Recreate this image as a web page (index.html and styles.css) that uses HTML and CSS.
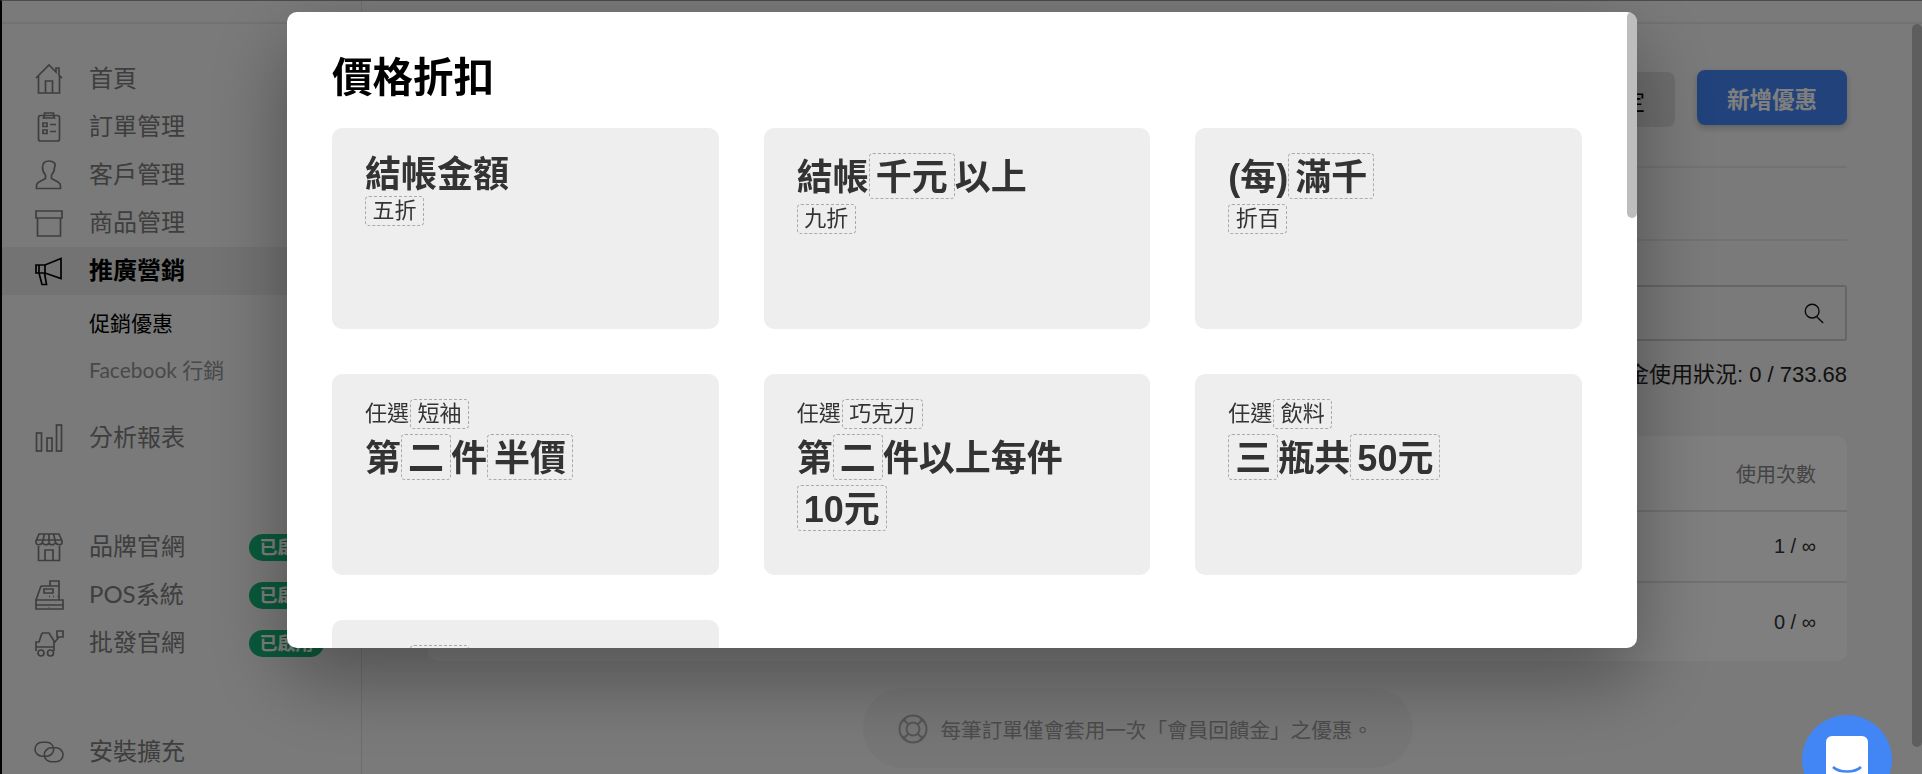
FILE: index.html
```html
<!DOCTYPE html>
<html lang="zh-Hant">
<head>
    <meta charset="UTF-8">
    <title>促銷優惠</title>
    <link rel="stylesheet" href="styles.css">
</head>
<body>
    <div class="app">
        <div class="topbar"><div class="topbar-left"></div></div>
        <div class="layout">
            <!-- Sidebar -->
            <aside class="sidebar">
                <a class="nav-item">
                    <svg class="nav-icon" viewBox="0 0 28 30"><path d="M1 14 14 1l7 7V4h3v7.500L27 14M3.500 12v17h21V12M10.500 29V17h7v12"/></svg>
                    <span>首頁</span>
                </a>
                <a class="nav-item">
                    <svg class="nav-icon" viewBox="0 0 28 30"><rect x="3.500" y="3.500" width="21" height="25.500" rx="2"/><path d="M9.500 3.500V1h9v2.500l1 2.500h-11zM8 11h4v3.500H8zM8 18h4v3.500H8zM15 12.500h6M15 19.500h6"/></svg>
                    <span>訂單管理</span>
                </a>
                <a class="nav-item">
                    <svg class="nav-icon" viewBox="0 0 28 30"><path d="M14 1c-4.500 0-6.500 3-6.500 6.500 0 3 1 5.500 3 7.500v3.500L4 22c-1.500.8-2.500 2-2.500 4v2.500h24V26c0-2-1-3.200-2.500-4l-6.500-3.500V15c2-2 3-4.500 3-7.500C21.500 4 18.500 1 14 1z"/></svg>
                    <span>客戶管理</span>
                </a>
                <a class="nav-item">
                    <svg class="nav-icon" viewBox="0 0 28 30"><path d="M1 3h26v7H1zM2.500 10v18h23V10"/></svg>
                    <span>商品管理</span>
                </a>
                <a class="nav-item nav-active">
                    <svg class="nav-icon" viewBox="0 0 28 30"><path d="M1 9h9l16-6.500v20L10 17H1zM10 9v8M4 17l3 11.500h4.500L9.500 17"/><path d="M4 9v8"/></svg>
                    <span>推廣營銷</span>
                </a>
                <a class="nav-sub nav-sub-active">促銷優惠</a>
                <a class="nav-sub">Facebook 行銷</a>

                <a class="nav-item nav-report">
                    <svg class="nav-icon" viewBox="0 0 28 30"><rect x="1.500" y="10" width="5" height="18"/><rect x="12" y="15" width="5" height="13"/><rect x="21.500" y="2" width="5" height="26"/></svg>
                    <span>分析報表</span>
                </a>

                <a class="nav-item nav-group">
                    <svg class="nav-icon" viewBox="0 0 28 30"><path d="M4 2h20l3 7v1.500c0 3-5 3-6.500 0-1 3-6 3-6.500 0-.5 3-5.500 3-6.500 0C6 13.500 1 13.500 1 10.500V9zM1 8h26M9.500 2 7.500 10M18.500 2l2 8M14 2v8M3.500 14v14.500h21V14M10 28.500V18h8v10.500"/></svg>
                    <span>品牌官網</span>
                    <em class="badge">已啟用</em>
                </a>
                <a class="nav-item">
                    <svg class="nav-icon" viewBox="0 0 28 30"><path d="M15 1h9v5h-9zM6 6h18v14M6 6 1 20M9 9h9v4H9zM1 20h27v9H1zM1 25h27M14 27v.5M14 16.500h1M18 16.500h1M22 16.500h.5"/></svg>
                    <span>POS系統</span>
                    <em class="badge">已啟用</em>
                </a>
                <a class="nav-item">
                    <svg class="nav-icon" viewBox="0 0 28 30"><path d="M7 5h7l5 8v10M7 5 4 14H1v9M1 19h18M22 3h6v6h-6zM24 9l-5 6"/><circle cx="6" cy="25" r="3"/><circle cx="15.500" cy="25" r="3"/></svg>
                    <span>批發官網</span>
                    <em class="badge">已啟用</em>
                </a>

                <a class="nav-item nav-group">
                    <svg class="nav-icon" viewBox="0 0 30 30"><rect x="0" y="4.500" width="20" height="15" rx="7.500"/><rect x="10" y="10.500" width="20" height="15" rx="7.500"/></svg>
                    <span>安裝擴充</span>
                </a>
            </aside>

            <!-- Main content -->
            <main class="main">
                <div class="page-actions">
                    <button class="btn btn-light">折扣設定</button>
                    <button class="btn btn-primary">新增優惠</button>
                </div>
                <div class="tabs"></div>
                <div class="search-row">
                    <div class="search-box">
                        <svg class="search-icon" viewBox="0 0 24 24"><circle cx="10" cy="10" r="7.500"/><path d="m15 16 7 7"/></svg>
                    </div>
                </div>
                <p class="usage">會員回饋金使用狀況: 0 / 733.68</p>
                <div class="table-card">
                    <div class="table-row table-head">使用次數</div>
                    <div class="table-row">1 / ∞</div>
                    <div class="table-row table-last">0 / ∞</div>
                </div>
                <div class="tip-row">
                    <div class="tip">
                        <svg class="tip-icon" viewBox="0 0 30 30"><circle cx="15" cy="15" r="13.500"/><circle cx="15" cy="15" r="6.500"/><path d="m5.500 5.500 5 5M19.500 10.500l5-5M5.500 24.500l5-5M19.500 19.500l5 5M8 4l-4 4M26 8l-4-4M4 22l4 4M22 26l4-4"/></svg>
                        <span>每筆訂單僅會套用一次「會員回饋金」之優惠。</span>
                    </div>
                </div>
            </main>
            <div class="page-scroll"><div class="page-thumb"></div></div>
        </div>
    </div>

    <div class="overlay"></div>

    <!-- Price discount dialog -->
    <div class="modal">
        <div class="modal-body">
            <h2 class="modal-title">價格折扣</h2>
            <div class="card-grid">
                <div class="card">
                    <div class="card-title">結帳金額</div>
                    <div class="card-sub"><span class="tag">五折</span></div>
                </div>
                <div class="card">
                    <div class="card-title">結帳<span class="tag">千元</span>以上</div>
                    <div class="card-sub"><span class="tag">九折</span></div>
                </div>
                <div class="card">
                    <div class="card-title">(每)<span class="tag">滿千</span></div>
                    <div class="card-sub"><span class="tag">折百</span></div>
                </div>
                <div class="card">
                    <div class="card-sub"><span class="pick">任選</span><span class="tag">短袖</span></div>
                    <div class="card-title">第<span class="tag">二</span>件<span class="tag">半價</span></div>
                </div>
                <div class="card">
                    <div class="card-sub"><span class="pick">任選</span><span class="tag">巧克力</span></div>
                    <div class="card-title">第<span class="tag">二</span>件以上每件<span class="tag">10元</span></div>
                </div>
                <div class="card">
                    <div class="card-sub"><span class="pick">任選</span><span class="tag">飲料</span></div>
                    <div class="card-title"><span class="tag">三</span>瓶共<span class="tag">50元</span></div>
                </div>
                <div class="card">
                    <div class="card-sub"><span class="pick">任選</span><span class="tag">短袖</span></div>
                    <div class="card-title">買<span class="tag">一</span>送<span class="tag">一</span></div>
                </div>
            </div>
        </div>
        <div class="modal-thumb"></div>
    </div>

    <div class="chat-bubble">
        <div class="chat-face">
            <svg class="chat-smile" viewBox="0 0 30 8"><path d="M1 1c6 6 22 6 28 0"/></svg>
        </div>
    </div>
</body>
</html>
```

FILE: styles.css
```css
* {
    box-sizing: border-box;
}
html, body {
    height: 100%;
}
body {
    margin: 0;
    overflow: hidden;
    background-color: #f4f4f4;
    color: #333;
    font-family: "Liberation Sans", "Noto Sans CJK TC", sans-serif;
}
.app {
    height: 774px;
    border-top: 1px solid #999;
    border-left: 2px solid #000;
    display: flex;
    flex-direction: column;
}
.topbar {
    height: 23px;
    flex: none;
    border-bottom: 2px solid #e4e4e4;
}
.topbar-left {
    width: 360px;
    height: 100%;
    border-right: 1px solid #dcdcdc;
}
.layout {
    flex: 1;
    display: flex;
    min-height: 0;
}

/* Sidebar */
.sidebar {
    width: 360px;
    flex: none;
    padding-top: 31px;
    border-right: 1px solid #dcdcdc;
    font-family: Lato, "Noto Sans CJK TC", sans-serif;
}
.nav-item {
    height: 48px;
    display: flex;
    align-items: center;
    padding-left: 33px;
    font-size: 24px;
    color: #7c7c7c;
}
.nav-item span {
    width: 95px;
    padding-bottom: 6px;
    white-space: nowrap;
}
.nav-icon {
    width: 28px;
    height: 30px;
    flex: none;
    margin-right: 26px;
    fill: none;
    stroke: currentColor;
    stroke-width: 1.700;
    overflow: visible;
}
.nav-active {
    background-color: #e6e6e6;
    color: #000;
    font-weight: 700;
}
.nav-sub {
    display: flex;
    align-items: center;
    height: 47px;
    padding-left: 87px;
    font-size: 21px;
    color: #929292;
}
.nav-sub-active {
    margin-top: 3px;
    color: #000;
}
.nav-report {
    margin-top: 22px;
}
.nav-group {
    margin-top: 61px;
}
.badge {
    margin-left: 65px;
    width: 75px;
    height: 27px;
    line-height: 27px;
    border-radius: 14px;
    text-align: center;
    font-style: normal;
    font-size: 18px;
    font-weight: 700;
    color: #fff;
    background-color: #15b378;
}

/* Main content */
.main {
    flex: 1;
    min-width: 0;
    padding: 0 65px 0 66px;
}
.page-actions {
    display: flex;
    justify-content: flex-end;
    align-items: flex-start;
    gap: 22px;
    padding-top: 46px;
    height: 142px;
}
.btn {
    height: 55px;
    padding: 0 30px;
    border: none;
    border-radius: 8px;
    font-size: 22.500px;
    font-family: inherit;
}
.btn-light {
    margin-top: 2px;
    background-color: #dcdcdc;
    color: #000;
}
.btn-primary {
    width: 150px;
    background-color: #4285f4;
    color: #fff;
    font-weight: 700;
    box-shadow: 0 3px 6px rgba(0, 0, 0, 0.2);
}
.tabs {
    height: 75px;
    border-top: 2px solid #e4e4e4;
    border-bottom: 2px solid #e4e4e4;
}
.search-row {
    display: flex;
    justify-content: flex-end;
    padding-top: 44px;
}
.search-box {
    width: 420px;
    height: 56px;
    padding-right: 20px;
    display: flex;
    justify-content: flex-end;
    align-items: center;
    border: 2px solid #ccc;
    border-radius: 3px;
}
.search-icon {
    width: 22px;
    height: 22px;
    fill: none;
    stroke: #111;
    stroke-width: 1.500;
}
.usage {
    margin: 18px 0 0;
    height: 31px;
    line-height: 31px;
    text-align: right;
    font-size: 22px;
    color: #222;
}
.table-card {
    margin-top: 46px;
    height: 225px;
    background-color: #fff;
    border-radius: 10px;
}
.table-row {
    height: 71px;
    padding-right: 31px;
    display: flex;
    align-items: center;
    justify-content: flex-end;
    border-bottom: 2px solid #e4e4e4;
    font-size: 20px;
}
.table-head {
    height: 76px;
    color: #888;
}
.table-last {
    height: 78px;
    border-bottom: none;
}
.tip-row {
    display: flex;
    justify-content: center;
    padding-top: 27px;
}
.tip {
    width: 550px;
    height: 80px;
    padding-left: 35px;
    padding-top: 1px;
    display: flex;
    align-items: center;
    gap: 13px;
    border-radius: 40px;
    background-color: #ececec;
    font-size: 20.600px;
    color: #999;
    white-space: nowrap;
}
.tip-icon {
    width: 30px;
    height: 30px;
    flex: none;
    fill: none;
    stroke: #aaa;
    stroke-width: 2;
}
.page-scroll {
    width: 10px;
    flex: none;
}
.page-thumb {
    height: 723px;
    background-color: #bdbdbd;
    border-radius: 5px;
}

/* Dialog */
.overlay {
    position: fixed;
    inset: 0;
    background-color: rgba(0, 0, 0, 0.5);
}
.modal {
    position: fixed;
    left: 287px;
    top: 12px;
    width: 1350px;
    height: 636px;
    background-color: #fff;
    border-radius: 10px;
    overflow: hidden;
    box-shadow: 0 30px 80px rgba(0, 0, 0, 0.35);
}
.modal-body {
    height: 100%;
    overflow: hidden;
    padding: 36px 55px 0 45px;
}
.modal-thumb {
    position: absolute;
    top: 0;
    right: 0;
    width: 10px;
    height: 206px;
    background-color: #bdbdbd;
    border-radius: 5px;
}
.modal-title {
    margin: 0 0 20px;
    height: 60px;
    line-height: 60px;
    font-size: 40.500px;
    font-weight: 700;
    color: #000;
}
.card-grid {
    display: grid;
    grid-template-columns: repeat(3, 1fr);
    grid-auto-rows: 201px;
    gap: 45px;
}
.card {
    padding: 25px 33px;
    background-color: #eee;
    border-radius: 10px;
    color: #333;
}
.card-title {
    font-size: 36px;
    font-weight: 700;
    line-height: 43px;
}
.card-sub {
    font-size: 22px;
    line-height: 30px;
}
.pick {
    margin-right: 1px;
}
.tag {
    display: inline-block;
    padding: 0 6px;
    border: 1px dashed #aaa;
    border-radius: 4px;
}
.card-title .tag {
    height: 46px;
    line-height: 48px;
    margin-bottom: 5px;
}
.card-sub .tag {
    vertical-align: top;
    height: 30px;
    line-height: 28px;
    padding: 0 6.500px;
    margin-bottom: 5px;
}

/* Chat widget */
.chat-bubble {
    position: fixed;
    left: 1802px;
    top: 715px;
    width: 90px;
    height: 90px;
    display: flex;
    justify-content: center;
    padding-top: 21px;
    border-radius: 50%;
    background-color: #4285f4;
}
.chat-face {
    width: 42px;
    height: 50px;
    padding-top: 30px;
    display: flex;
    justify-content: center;
    background-color: #fff;
    border-radius: 6px;
}
.chat-smile {
    width: 30px;
    height: 8px;
    fill: none;
    stroke: #4285f4;
    stroke-width: 2.500;
}
```
